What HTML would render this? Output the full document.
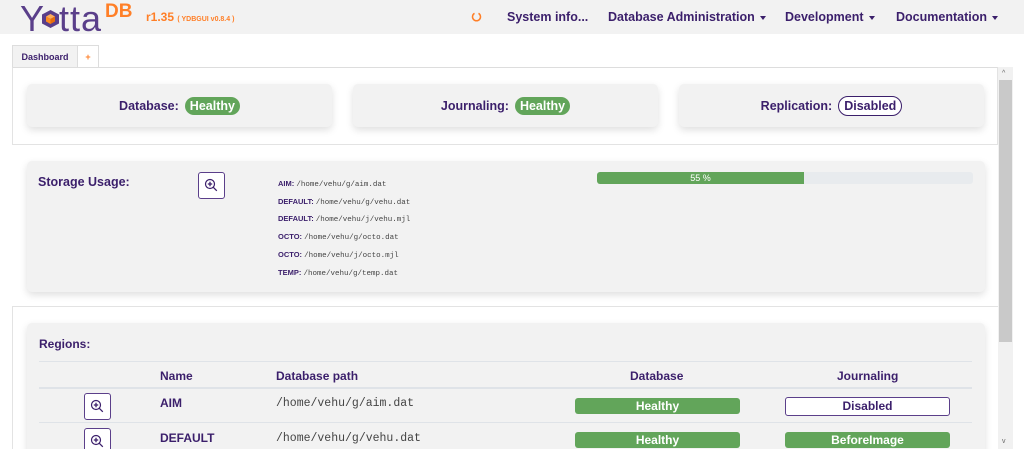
<!DOCTYPE html>
<html><head><meta charset="utf-8"><style>
*{box-sizing:border-box;margin:0;padding:0}
body{width:1024px;height:466px;overflow:hidden;background:#fff;font-family:"Liberation Sans",sans-serif;color:#3b1f6b;position:relative}
.a{position:absolute}
.b{font-weight:bold}
.hdr{left:0;top:0;width:1024px;height:34px;background:#f2f2f2}
.nav{top:10px;font-size:12.5px;font-weight:bold;color:#3b1f6b;white-space:nowrap}
.car{display:inline-block;width:0;height:0;border-left:3px solid transparent;border-right:3px solid transparent;border-top:4px solid #3b1f6b;vertical-align:middle;margin-left:5px}
.card{background:#f2f2f2;border-radius:5px;box-shadow:0 3px 8px rgba(0,0,0,.13)}
.pill{display:inline-block;border-radius:11px;padding:2px 5px;font-weight:bold;font-size:12.5px}
.g{background:#62a55a;color:#fff}
.o{border:1px solid #3b1f6b;color:#3b1f6b;background:#fff}
.st{font-size:12.5px;font-weight:bold;display:flex;align-items:center;justify-content:center;gap:6px}
.zb{width:27px;height:27px;border:1px solid #5b3f8a;border-radius:3px;background:#fff}
.f{left:278px;font-size:7.5px;white-space:nowrap}
.f b{font-weight:bold}
.f span{font-family:"Liberation Mono",monospace;color:#444}
.bd{height:16px;border-radius:3px;font-size:12px;font-weight:bold;text-align:center;line-height:16px}
.ln{height:1px;background:#dfe3e8;left:39px;width:933px}
.mp{font-size:11.5px;font-family:'Liberation Mono',monospace;color:#444}
</style></head><body>
<div class="a hdr"></div>
<div class="a" style="left:20px;top:-2px;font-size:36px;color:#5a3f8a;letter-spacing:1px">Y</div>
<svg class="a" style="left:42px;top:10px" width="17" height="18" viewBox="0 0 17 18"><polygon points="8.5,0 17,4.5 17,13.5 8.5,18 0,13.5 0,4.5" fill="#5a3f8a"/><polygon points="8.5,4 13,6.5 8.5,9 4,6.5" fill="#ffae5a"/><polygon points="4,6.5 8.5,9 8.5,14 4,11.5" fill="#ff8a1f"/><polygon points="13,6.5 8.5,9 8.5,14 13,11.5" fill="#e86d0c"/></svg>
<div class="a" style="left:59px;top:-2px;font-size:36px;color:#5a3f8a;letter-spacing:1px">tta</div>
<div class="a b" style="left:105px;top:1px;font-size:19px;color:#ff7f27">DB</div>
<div class="a b" style="left:146px;top:10px;font-size:12px;color:#ff7f27">r1.35 <span style="font-size:7px">( YDBGUI v0.8.4 )</span></div>
<svg class="a" style="left:471px;top:11px" width="11" height="11" viewBox="0 0 11 11"><path d="M3.5 2.3A4 4 0 1 0 7.5 2.3" fill="none" stroke="#ff7f27" stroke-width="1.5"/></svg>
<div class="a nav" style="left:507px">System info...</div>
<div class="a nav" style="left:608px">Database Administration<span class="car"></span></div>
<div class="a nav" style="left:785px">Development<span class="car"></span></div>
<div class="a nav" style="left:896px">Documentation<span class="car"></span></div>
<div class="a b" style="left:12px;top:45px;width:66px;height:23px;background:#f2f2f2;border:1px solid #ddd;border-bottom:none;font-size:9px;line-height:22px;text-align:center">Dashboard</div>
<div class="a b" style="left:77px;top:45px;width:22px;height:23px;background:#fff;border:1px solid #ddd;border-bottom:none;font-size:9px;line-height:22px;text-align:center;color:#ff7f27">+</div>
<div class="a" style="left:12px;top:67px;width:986px;height:78px;border:1px solid #e3e3e3;border-top:1px solid #ddd"></div>
<div class="a card st" style="left:27px;top:84px;width:305px;height:43px">Database: <span class="pill g">Healthy</span></div>
<div class="a card st" style="left:353px;top:84px;width:305px;height:43px">Journaling: <span class="pill g">Healthy</span></div>
<div class="a card st" style="left:679px;top:84px;width:305px;height:43px">Replication: <span class="pill o">Disabled</span></div>
<div class="a" style="left:12px;top:306px;width:986px;height:1px;background:#e3e3e3"></div>
<div class="a" style="left:12px;top:306px;width:1px;height:143px;background:#e3e3e3"></div>
<div class="a card" style="left:27px;top:161px;width:958px;height:131px"></div>
<div class="a b" style="left:38px;top:175px;font-size:12.5px">Storage Usage:</div>
<div class="a zb" style="left:198px;top:172px"></div>
<svg class="a" style="left:204px;top:178px" width="15" height="15" viewBox="0 0 15 15"><circle cx="6" cy="6" r="4.5" fill="none" stroke="#3b1f6b" stroke-width="1.2"/><path d="M6 3.8v4.4M3.8 6h4.4M9.3 9.3l3.5 3.5" stroke="#3b1f6b" stroke-width="1.3"/></svg>
<div class="a f" style="top:179px"><b>AIM:</b> <span>/home/vehu/g/aim.dat</span></div>
<div class="a f" style="top:197px"><b>DEFAULT:</b> <span>/home/vehu/g/vehu.dat</span></div>
<div class="a f" style="top:214px"><b>DEFAULT:</b> <span>/home/vehu/j/vehu.mjl</span></div>
<div class="a f" style="top:232px"><b>OCTO:</b> <span>/home/vehu/g/octo.dat</span></div>
<div class="a f" style="top:250px"><b>OCTO:</b> <span>/home/vehu/j/octo.mjl</span></div>
<div class="a f" style="top:268px"><b>TEMP:</b> <span>/home/vehu/g/temp.dat</span></div>
<div class="a" style="left:597px;top:172px;width:376px;height:12px;background:#e8ebee;border-radius:3px"></div>
<div class="a" style="left:597px;top:172px;width:207px;height:12px;background:#62a55a;border-radius:3px 0 0 3px;color:#fff;font-size:9px;text-align:center;line-height:12px">55 %</div>
<div class="a card" style="left:27px;top:323px;width:958px;height:140px"></div>
<div class="a b" style="left:39px;top:337px;font-size:12px">Regions:</div>
<div class="a ln" style="top:361px"></div>
<div class="a ln" style="top:387px;height:2px"></div>
<div class="a ln" style="top:422px"></div>
<div class="a b" style="left:160px;top:369px;font-size:12px">Name</div>
<div class="a b" style="left:276px;top:369px;font-size:12px">Database path</div>
<div class="a b" style="left:630px;top:369px;font-size:12px">Database</div>
<div class="a b" style="left:837px;top:369px;font-size:12px">Journaling</div>
<div class="a zb" style="left:84px;top:393px"></div>
<svg class="a" style="left:90px;top:399px" width="15" height="15" viewBox="0 0 15 15"><circle cx="6" cy="6" r="4.5" fill="none" stroke="#3b1f6b" stroke-width="1.2"/><path d="M6 3.8v4.4M3.8 6h4.4M9.3 9.3l3.5 3.5" stroke="#3b1f6b" stroke-width="1.3"/></svg>
<div class="a zb" style="left:84px;top:428px"></div>
<svg class="a" style="left:90px;top:434px" width="15" height="15" viewBox="0 0 15 15"><circle cx="6" cy="6" r="4.5" fill="none" stroke="#3b1f6b" stroke-width="1.2"/><path d="M6 3.8v4.4M3.8 6h4.4M9.3 9.3l3.5 3.5" stroke="#3b1f6b" stroke-width="1.3"/></svg>
<div class="a b" style="left:160px;top:396px;font-size:12px">AIM</div>
<div class="a mp" style="left:276px;top:397px">/home/vehu/g/aim.dat</div>
<div class="a bd g" style="left:575px;top:398px;width:165px">Healthy</div>
<div class="a bd" style="left:785px;top:397px;width:165px;height:19px;border:1px solid #5b3f8a;background:#fff;line-height:17px">Disabled</div>
<div class="a b" style="left:160px;top:431px;font-size:12px">DEFAULT</div>
<div class="a mp" style="left:276px;top:432px">/home/vehu/g/vehu.dat</div>
<div class="a bd g" style="left:575px;top:432px;width:165px">Healthy</div>
<div class="a bd g" style="left:785px;top:432px;width:165px">BeforeImage</div>
<div class="a" style="left:0;top:449px;width:1024px;height:17px;background:#fff"></div>
<div class="a" style="left:998px;top:67px;width:15px;height:382px;background:#f1f1f1"></div>
<div class="a" style="left:999px;top:80px;width:13px;height:262px;background:#c9c9c9"></div>
<div class="a" style="left:1002px;top:70px;font-size:7px;color:#666">^</div>
<div class="a" style="left:1002px;top:438px;font-size:7px;color:#666">v</div>
</body></html>
